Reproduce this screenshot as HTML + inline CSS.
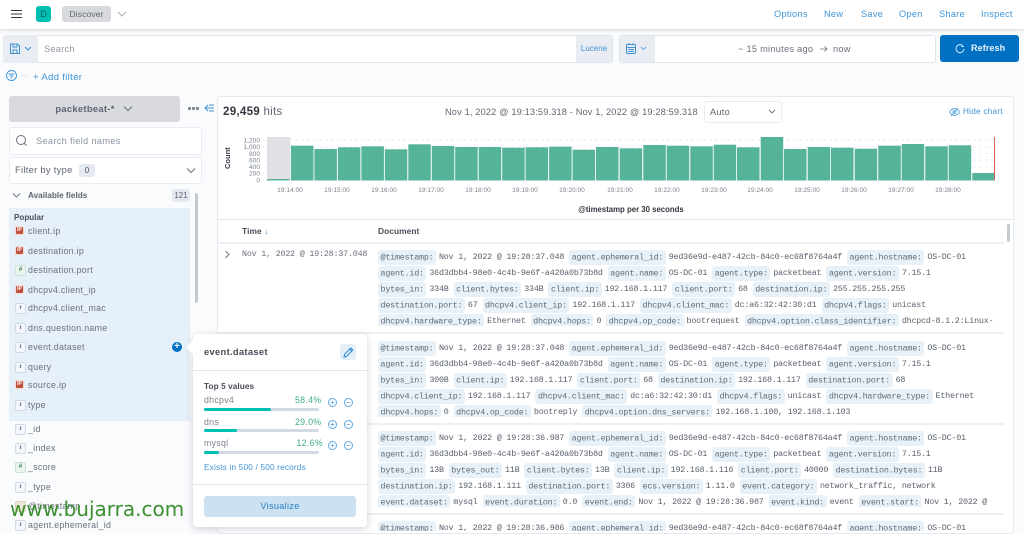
<!DOCTYPE html>
<html><head><meta charset="utf-8"><style>
html,body{margin:0;padding:0;width:1024px;height:531px;overflow:hidden;background:#fafbfd;font-family:"Liberation Sans",sans-serif;}
.a{position:absolute;white-space:nowrap;}
.t{position:absolute;white-space:nowrap;font-size:9.2px;letter-spacing:.28px;color:#5f6673;line-height:12px;transform:translateY(-6px);}
.l{position:absolute;white-space:nowrap;font-size:9.2px;letter-spacing:.3px;color:#3f93d4;line-height:12px;transform:translateY(-6px);}
.f{position:absolute;left:28px;white-space:nowrap;font-size:8.8px;letter-spacing:.3px;color:#69707d;line-height:12px;transform:translateY(-6px);}
.i{position:absolute;left:15px;width:9px;height:9px;border-radius:2px;background:#f3f6fa;border:.5px solid #d3dae6;transform:translateY(-5px);font:italic bold 6px/9px "Liberation Serif",serif;color:#4a5a78;text-align:center;}
.ip{background:#c0523e;border:1.5px solid #f8d7cf;width:7px;height:7px;color:#fff;font:bold 5px/7px "Liberation Sans",sans-serif;}
.nu{background:#eaf5ee;border-color:#cde5d8;color:#3f7d5f;font:bold 6px/9px "Liberation Sans",sans-serif;}
.d{position:absolute;left:378px;width:630px;font:8.4px/16px "Liberation Mono",monospace;letter-spacing:-.21px;color:#5a616d;white-space:nowrap;overflow:hidden;}
.d div{height:16px;}
.d b{font-weight:normal;background:#e8f1f8;color:#626a77;border-radius:3px;padding:2.5px 2.5px;margin-right:3px;}
.d i{font-style:normal;margin-right:5px;}
.sep{position:absolute;left:218px;width:786px;height:2px;background:#eef0f5;}
.c{position:absolute;width:7px;height:7px;border:1px solid #5fa6dc;border-radius:50%;transform:translateY(-4px);color:#3f93d4;font:8px/7px "Liberation Sans",sans-serif;text-align:center;}
svg{position:absolute;overflow:visible;}
</style></head><body>

<div class="a" style="left:0;top:0;width:1024px;height:29px;background:#fff;box-shadow:0 1px 3px rgba(90,100,120,.25);"></div>
<div class="a" style="left:11px;top:10px;width:11px;height:1px;background:#343741;box-shadow:0 3.5px 0 #343741,0 7px 0 #343741;"></div>
<div class="a" style="left:36px;top:6px;width:15px;height:16px;border-radius:3px;background:#00bfb3;color:#0b5f58;font-size:9px;line-height:16px;text-align:center;">D</div>
<div class="a" style="left:62px;top:6px;width:49px;height:16px;border-radius:3px;background:#d8d9dc;color:#5f6673;font-size:8.6px;letter-spacing:.1px;line-height:16px;text-align:center;">Discover</div>
<svg style="left:117px;top:10px" width="12" height="8" fill="none" stroke="#a8adb5" stroke-width="1"><path d="M1 2l4 4 4-4"/></svg>
<div class="l" style="left:774px;top:14px;">Options</div>
<div class="l" style="left:824px;top:14px;">New</div>
<div class="l" style="left:861px;top:14px;">Save</div>
<div class="l" style="left:899px;top:14px;">Open</div>
<div class="l" style="left:939px;top:14px;">Share</div>
<div class="l" style="left:981px;top:14px;">Inspect</div>

<div class="a" style="left:3px;top:35px;width:608px;height:26px;background:#fff;border:1px solid #dfe4ec;border-radius:3px;"></div>
<div class="a" style="left:3px;top:35px;width:35px;height:28px;background:#e9edf3;border-radius:3px 0 0 3px;"></div>
<svg style="left:10px;top:43px" width="26" height="12" fill="none" stroke="#3f93d4" stroke-width="1"><path d="M.5 1h7l2 2v7.5H.5zM3 1v3h4V1M3 10V7h4v3"/><path d="M15 4l3 3 3-3"/></svg>
<div class="t" style="left:44px;top:49px;color:#9098a4;">Search</div>
<div class="a" style="left:576px;top:36px;width:36px;height:26px;background:#e9edf3;color:#3f93d4;font-size:8px;line-height:26px;text-align:center;">Lucene</div>
<div class="a" style="left:619px;top:35px;width:315px;height:26px;background:#fff;border:1px solid #dfe4ec;border-radius:3px;"></div>
<div class="a" style="left:620px;top:36px;width:35px;height:26px;background:#e9edf3;border-radius:3px 0 0 3px;"></div>
<svg style="left:626px;top:43px" width="26" height="12" fill="none" stroke="#3f93d4" stroke-width="1"><rect x=".5" y="1.5" width="9" height="9" rx="1"/><path d="M.5 4.500h9M3 0v2M7 0v2M2 6.500h6M2 8.500h6"/><path d="M15 4l2.500 2.500L20 4" stroke="#6ba9dc"/></svg>
<div class="t" style="left:738px;top:49px;color:#69707d;">~ 15 minutes ago</div>
<svg style="left:819px;top:45px" width="10" height="8" fill="none" stroke="#69707d" stroke-width=".8"><path d="M1 4h7M5.500 1.500L8 4 5.500 6.500"/></svg>
<div class="t" style="left:833px;top:49px;color:#69707d;">now</div>
<div class="a" style="left:940px;top:35px;width:79px;height:27px;background:#0071c2;border-radius:3px;"></div>
<svg style="left:955px;top:44px" width="10" height="10" fill="none" stroke="#cfe6f7" stroke-width="1"><path d="M7.500 1.500A4 4 0 1 0 9 5M7 .5v2h2"/></svg>
<div class="a" style="left:971px;top:42px;color:#eaf4fb;font-size:9px;font-weight:bold;line-height:13px;letter-spacing:.1px;">Refresh</div>

<svg style="left:6px;top:70px" width="12" height="12" fill="none" stroke="#3f93d4" stroke-width=".9"><circle cx="5.500" cy="5.500" r="5"/><path d="M2.500 4h6M3.500 6h4M4.800 8h1.500"/></svg>
<div class="a" style="left:21px;top:75px;width:6px;height:1px;background:#e3e6ec;"></div>
<div class="l" style="left:33px;top:78px;font-size:9.6px;">+ Add filter</div>

<div class="a" style="left:9px;top:96px;width:171px;height:26px;background:#d8dadd;border-radius:3px;color:#5f6673;font-size:9.4px;font-weight:bold;line-height:26px;letter-spacing:.3px;text-align:center;"><span style="margin-right:19px;">packetbeat-*</span></div>
<svg style="left:123px;top:105px" width="12" height="8" fill="none" stroke="#69707d" stroke-width="1"><path d="M1 1.500l4 4 4-4"/></svg>
<div class="a" style="left:188px;top:107px;width:3px;height:3px;background:#7b828e;box-shadow:4px 0 0 #7b828e,8px 0 0 #7b828e;border-radius:1px;"></div>
<svg style="left:204px;top:104px" width="11" height="9" fill="none" stroke="#3f93d4" stroke-width="1"><path d="M4 1L1 4l3 3M1 4h9M5 1h5M5 7h5"/></svg>
<div class="a" style="left:9px;top:127px;width:191px;height:26px;background:#fff;border:1px solid #e9ecf2;border-radius:3px;"></div>
<svg style="left:16px;top:135px" width="12" height="12" fill="none" stroke="#69707d" stroke-width="1"><circle cx="5" cy="5" r="4.500"/><path d="M8.200 8.200l2.500 2.500"/></svg>
<div class="t" style="left:36px;top:141px;color:#8d95a2;font-size:9.3px;">Search field names</div>
<div class="a" style="left:9px;top:157px;width:191px;height:25px;background:#fff;border:1px solid #e9ecf2;border-radius:3px;"></div>
<div class="t" style="left:15px;top:170px;font-size:9.4px;">Filter by type</div>
<div class="a" style="left:79px;top:164px;width:16px;height:13px;background:#e4e8ef;border-radius:3px;color:#4f5662;font-size:8px;line-height:13px;text-align:center;">0</div>
<svg style="left:186px;top:167px" width="12" height="8" fill="none" stroke="#69707d" stroke-width="1"><path d="M1 1.500l4 4 4-4"/></svg>

<svg style="left:12px;top:192px" width="10" height="7" fill="none" stroke="#69707d" stroke-width=".9"><path d="M1 1.500l3.500 3.500L8 1.500"/></svg>
<div class="t" style="left:28px;top:196px;font-weight:bold;font-size:8.2px;letter-spacing:0;">Available fields</div>
<div class="a" style="left:172px;top:189px;width:18px;height:13px;background:#e4e8ef;border-radius:3px;color:#5f6673;font-size:8px;line-height:13px;text-align:center;">121</div>
<div class="a" style="left:195px;top:193px;width:3px;height:110px;background:#c3c8d1;border-radius:2px;"></div>
<div class="a" style="left:9px;top:208px;width:181px;height:213px;background:#e6f0f8;"></div>
<div class="t" style="left:14px;top:218px;font-weight:bold;font-size:8px;letter-spacing:.05px;color:#474d58;">Popular</div>

<div class="i ip" style="top:231px;">IP</div><div class="f" style="top:231px;">client.ip</div>
<div class="i ip" style="top:251px;">IP</div><div class="f" style="top:251px;">destination.ip</div>
<div class="i nu" style="top:270px;">#</div><div class="f" style="top:270px;">destination.port</div>
<div class="i ip" style="top:290px;">IP</div><div class="f" style="top:290px;">dhcpv4.client_ip</div>
<div class="i" style="top:308px;">t</div><div class="f" style="top:308px;">dhcpv4.client_mac</div>
<div class="i" style="top:328px;">t</div><div class="f" style="top:328px;">dns.question.name</div>
<div class="i" style="top:347px;">t</div><div class="f" style="top:347px;">event.dataset</div>
<div class="i" style="top:367px;">t</div><div class="f" style="top:367px;">query</div>
<div class="i ip" style="top:385px;">IP</div><div class="f" style="top:385px;">source.ip</div>
<div class="i" style="top:405px;">t</div><div class="f" style="top:405px;">type</div>
<div class="i" style="top:429px;">t</div><div class="f" style="top:429px;">_id</div>
<div class="i" style="top:448px;">t</div><div class="f" style="top:448px;">_index</div>
<div class="i nu" style="top:467px;">#</div><div class="f" style="top:467px;">_score</div>
<div class="i" style="top:487px;">t</div><div class="f" style="top:487px;">_type</div>
<div class="i" style="top:506px;background:#efe6d8;border-color:#ded2bd;"></div><div class="f" style="top:506px;">@timestamp</div>
<div class="i" style="top:525px;">t</div><div class="f" style="top:525px;">agent.ephemeral_id</div>
<div class="a" style="left:172px;top:342px;width:10px;height:10px;background:#0071c2;border-radius:50%;color:#fff;font:bold 10px/10px 'Liberation Sans',sans-serif;text-align:center;">+</div>

<div class="a" style="left:217px;top:96px;width:795px;height:436px;background:#fff;border:1px solid #e6e9f0;border-radius:3px;"></div>
<div class="a" style="left:223px;top:105px;font-size:11.6px;letter-spacing:.25px;line-height:14px;color:#5f6673;"><b style="color:#343741;">29,459</b> hits</div>
<div class="t" style="left:445px;top:112px;font-size:9.2px;letter-spacing:.17px;">Nov 1, 2022 @ 19:13:59.318 - Nov 1, 2022 @ 19:28:59.318</div>
<div class="a" style="left:704px;top:101px;width:76px;height:20px;background:#fff;border:1px solid #e9ecf2;border-radius:3px;"></div>
<div class="t" style="left:710px;top:112px;font-size:9.2px;">Auto</div>
<svg style="left:768px;top:109px" width="9" height="6" fill="none" stroke="#69707d" stroke-width=".9"><path d="M1 1l3 3 3-3"/></svg>
<svg style="left:949px;top:107px" width="11" height="10" fill="none" stroke="#5fa6dc" stroke-width=".9"><path d="M.5 5C2 2.500 3.500 1.500 5.500 1.500S9 2.500 10.500 5C9 7.500 7.500 8.500 5.500 8.500S2 7.500.5 5z"/><circle cx="5.500" cy="5" r="1.600"/><path d="M2 9l7-8"/></svg>
<div class="l" style="left:963px;top:112px;font-size:8.2px;letter-spacing:.25px;">Hide chart</div>

<svg style="left:0;top:0" width="1024" height="531">
<g stroke="#eceef2" stroke-width="1" stroke-dasharray="3 3"><path d="M265 140H994M265 147H994M265 153.500H994M265 160H994M265 167H994M265 173.500H994"/></g>
<rect x="267" y="137" width="23.500" height="43.500" fill="#dfe1e5"/>
<g fill="#54b399">
<rect x="267" y="179" width="22.500" height="1.500"/><rect x="291" y="145.700" width="22.500" height="34.800"/><rect x="314.400" y="149" width="22.500" height="31.500"/><rect x="337.900" y="147.300" width="22.500" height="33.200"/><rect x="361.400" y="146.300" width="22.500" height="34.200"/><rect x="384.800" y="149.300" width="22.500" height="31.200"/><rect x="408.300" y="144.300" width="22.500" height="36.200"/><rect x="431.800" y="146" width="22.500" height="34.500"/><rect x="455.200" y="147" width="22.500" height="33.500"/><rect x="478.700" y="147" width="22.500" height="33.500"/><rect x="502.200" y="147.700" width="22.500" height="32.800"/><rect x="525.600" y="147.300" width="22.500" height="33.200"/><rect x="549.100" y="146.700" width="22.500" height="33.800"/><rect x="572.600" y="149.700" width="22.500" height="30.800"/><rect x="596" y="147" width="22.500" height="33.500"/><rect x="619.700" y="148.300" width="22.500" height="32.200"/><rect x="643.300" y="145" width="22.500" height="35.500"/><rect x="666.700" y="145.700" width="22.500" height="34.800"/><rect x="690.300" y="146.300" width="22.500" height="34.200"/><rect x="713.700" y="144.700" width="22.500" height="35.800"/><rect x="737" y="147.300" width="22.500" height="33.200"/><rect x="760.700" y="137" width="22.500" height="43.500"/><rect x="784" y="149" width="22.500" height="31.500"/><rect x="807.700" y="147" width="22.500" height="33.500"/><rect x="831" y="147.700" width="22.500" height="32.800"/><rect x="854.700" y="148.700" width="22.500" height="31.800"/><rect x="878.300" y="145.700" width="22.500" height="34.800"/><rect x="901.700" y="144" width="22.500" height="36.500"/><rect x="925.300" y="146.300" width="22.500" height="34.200"/><rect x="948.700" y="145.300" width="22.500" height="35.200"/><rect x="972.300" y="173" width="22" height="7.500"/>
</g>
<rect x="994" y="137" width="1" height="43.500" fill="#d9625a"/>
<g font-family="Liberation Sans,sans-serif" font-size="6.6" fill="#7b828e" text-anchor="end">
<text x="260" y="142.500">1,200</text><text x="260" y="149">1,000</text><text x="260" y="156">800</text><text x="260" y="162.500">600</text><text x="260" y="169">400</text><text x="260" y="175.500">200</text><text x="260" y="182.500">0</text>
</g>
<text transform="translate(230,169) rotate(-90)" font-family="Liberation Sans,sans-serif" font-size="7.5" font-weight="bold" fill="#343741">Count</text>
<g font-family="Liberation Sans,sans-serif" font-size="6.6" fill="#7b828e" text-anchor="middle">
<text x="290" y="192">19:14:00</text><text x="337" y="192">19:15:00</text><text x="384" y="192">19:16:00</text><text x="431" y="192">19:17:00</text><text x="478" y="192">19:18:00</text><text x="525" y="192">19:19:00</text><text x="572" y="192">19:20:00</text><text x="620" y="192">19:21:00</text><text x="667" y="192">19:22:00</text><text x="714" y="192">19:23:00</text><text x="760" y="192">19:24:00</text><text x="807" y="192">19:25:00</text><text x="854" y="192">19:26:00</text><text x="901" y="192">19:27:00</text><text x="948" y="192">19:28:00</text>
</g>
<text x="631" y="212" text-anchor="middle" font-family="Liberation Sans,sans-serif" font-size="7.8" font-weight="bold" fill="#343741">@timestamp per 30 seconds</text>
</svg>

<div class="a" style="left:218px;top:219px;width:794px;height:1px;background:#e3e6ed;"></div>
<div class="t" style="left:242px;top:231px;font-weight:bold;font-size:8.4px;letter-spacing:.1px;color:#474d58;">Time <span style="color:#3f93d4;font-weight:normal;">↓</span></div>
<div class="t" style="left:378px;top:231px;font-weight:bold;font-size:8.4px;letter-spacing:.05px;color:#474d58;">Document</div>
<div class="sep" style="top:242px;"></div>
<div class="a" style="left:1007px;top:224px;width:3px;height:18px;background:#c3c8d1;border-radius:2px;"></div>
<svg style="left:224px;top:250px" width="7" height="9" fill="none" stroke="#69707d" stroke-width=".9"><path d="M1.500 1l3.500 3.500L1.500 8"/></svg>
<div class="a" style="left:242px;top:249px;font:8.4px/10px 'Liberation Mono',monospace;letter-spacing:-.21px;color:#69707d;">Nov 1, 2022 @ 19:28:37.048</div>

<div class="d" style="top:249px;height:77px;">
<div><b>@timestamp:</b><i>Nov 1, 2022 @ 19:28:37.048</i><b>agent.ephemeral_id:</b><i>9ed36e9d-e487-42cb-84c0-ec68f8764a4f</i><b>agent.hostname:</b><i>OS-DC-01</i></div>
<div><b>agent.id:</b><i>36d3dbb4-98e0-4c4b-9e6f-a420a0b73b8d</i><b>agent.name:</b><i>OS-DC-01</i><b>agent.type:</b><i>packetbeat</i><b>agent.version:</b><i>7.15.1</i></div>
<div><b>bytes_in:</b><i>334B</i><b>client.bytes:</b><i>334B</i><b>client.ip:</b><i>192.168.1.117</i><b>client.port:</b><i>68</i><b>destination.ip:</b><i>255.255.255.255</i></div>
<div><b>destination.port:</b><i>67</i><b>dhcpv4.client_ip:</b><i>192.168.1.117</i><b>dhcpv4.client_mac:</b><i>dc:a6:32:42:30:d1</i><b>dhcpv4.flags:</b><i>unicast</i></div>
<div><b>dhcpv4.hardware_type:</b><i>Ethernet</i><b>dhcpv4.hops:</b><i>0</i><b>dhcpv4.op_code:</b><i>bootrequest</i><b>dhcpv4.option.class_identifier:</b><i>dhcpcd-8.1.2:Linux-</i></div>
</div>
<div class="sep" style="top:332px;"></div>
<div class="d" style="top:340px;height:77px;">
<div><b>@timestamp:</b><i>Nov 1, 2022 @ 19:28:37.048</i><b>agent.ephemeral_id:</b><i>9ed36e9d-e487-42cb-84c0-ec68f8764a4f</i><b>agent.hostname:</b><i>OS-DC-01</i></div>
<div><b>agent.id:</b><i>36d3dbb4-98e0-4c4b-9e6f-a420a0b73b8d</i><b>agent.name:</b><i>OS-DC-01</i><b>agent.type:</b><i>packetbeat</i><b>agent.version:</b><i>7.15.1</i></div>
<div><b>bytes_in:</b><i>300B</i><b>client.ip:</b><i>192.168.1.117</i><b>client.port:</b><i>68</i><b>destination.ip:</b><i>192.168.1.117</i><b>destination.port:</b><i>68</i></div>
<div><b>dhcpv4.client_ip:</b><i>192.168.1.117</i><b>dhcpv4.client_mac:</b><i>dc:a6:32:42:30:d1</i><b>dhcpv4.flags:</b><i>unicast</i><b>dhcpv4.hardware_type:</b><i>Ethernet</i></div>
<div><b>dhcpv4.hops:</b><i>0</i><b>dhcpv4.op_code:</b><i>bootreply</i><b>dhcpv4.option.dns_servers:</b><i>192.168.1.100, 192.168.1.103</i></div>
</div>
<div class="sep" style="top:423px;"></div>
<div class="d" style="top:430px;height:77px;">
<div><b>@timestamp:</b><i>Nov 1, 2022 @ 19:28:36.987</i><b>agent.ephemeral_id:</b><i>9ed36e9d-e487-42cb-84c0-ec68f8764a4f</i><b>agent.hostname:</b><i>OS-DC-01</i></div>
<div><b>agent.id:</b><i>36d3dbb4-98e0-4c4b-9e6f-a420a0b73b8d</i><b>agent.name:</b><i>OS-DC-01</i><b>agent.type:</b><i>packetbeat</i><b>agent.version:</b><i>7.15.1</i></div>
<div><b>bytes_in:</b><i>13B</i><b>bytes_out:</b><i>11B</i><b>client.bytes:</b><i>13B</i><b>client.ip:</b><i>192.168.1.116</i><b>client.port:</b><i>40000</i><b>destination.bytes:</b><i>11B</i></div>
<div><b>destination.ip:</b><i>192.168.1.111</i><b>destination.port:</b><i>3306</i><b>ecs.version:</b><i>1.11.0</i><b>event.category:</b><i>network_traffic, network</i></div>
<div><b>event.dataset:</b><i>mysql</i><b>event.duration:</b><i>0.0</i><b>event.end:</b><i>Nov 1, 2022 @ 19:28:36.987</i><b>event.kind:</b><i>event</i><b>event.start:</b><i>Nov 1, 2022 @</i></div>
</div>
<div class="sep" style="top:513px;"></div>
<div class="d" style="top:520px;height:11px;">
<div><b>@timestamp:</b><i>Nov 1, 2022 @ 19:28:36.986</i><b>agent.ephemeral_id:</b><i>9ed36e9d-e487-42cb-84c0-ec68f8764a4f</i><b>agent.hostname:</b><i>OS-DC-01</i></div>
</div>

<div class="a" style="left:193px;top:334px;width:174px;height:193px;background:#fff;border-radius:4px;box-shadow:0 2px 8px rgba(70,80,100,.25);"></div>
<div class="a" style="left:188px;top:343px;width:9px;height:9px;background:#fff;transform:rotate(45deg);"></div>
<div class="a" style="left:204px;top:346px;font-size:9.4px;font-weight:bold;letter-spacing:.3px;line-height:12px;color:#474d58;">event.dataset</div>
<div class="a" style="left:340px;top:344px;width:16px;height:16px;background:#e2eff9;border-radius:3px;"></div>
<svg style="left:343px;top:347px" width="11" height="11" fill="none" stroke="#2a86cc" stroke-width="1"><path d="M1 10l.6-2.800L7.800 1l2 2-6.200 6.300zM6.800 2l2 2"/></svg>
<div class="a" style="left:193px;top:370px;width:174px;height:1px;background:#e3e6ed;"></div>
<div class="t" style="left:204px;top:387px;font-weight:bold;font-size:8.2px;letter-spacing:.1px;color:#474d58;">Top 5 values</div>

<div class="t" style="left:204px;top:400px;font-size:8.8px;color:#7b828e;">dhcpv4</div>
<div class="t" style="left:295px;top:400px;font-size:8.8px;color:#41a98d;">58.4%</div>
<div class="a" style="left:204px;top:408px;width:115px;height:3px;background:#d3dae6;border-radius:2px;"><div style="width:67px;height:3px;background:#00bfb3;border-radius:2px;"></div></div>
<div class="c" style="left:328px;top:402px;">+</div><div class="c" style="left:344px;top:402px;">−</div>
<div class="t" style="left:204px;top:422px;font-size:8.8px;color:#7b828e;">dns</div>
<div class="t" style="left:295px;top:422px;font-size:8.8px;color:#41a98d;">29.0%</div>
<div class="a" style="left:204px;top:429px;width:115px;height:3px;background:#d3dae6;border-radius:2px;"><div style="width:33px;height:3px;background:#00bfb3;border-radius:2px;"></div></div>
<div class="c" style="left:328px;top:424px;">+</div><div class="c" style="left:344px;top:424px;">−</div>
<div class="t" style="left:204px;top:443px;font-size:8.8px;color:#7b828e;">mysql</div>
<div class="t" style="left:296.500px;top:443px;font-size:8.8px;color:#41a98d;">12.6%</div>
<div class="a" style="left:204px;top:451px;width:115px;height:3px;background:#d3dae6;border-radius:2px;"><div style="width:15px;height:3px;background:#00bfb3;border-radius:2px;"></div></div>
<div class="c" style="left:328px;top:445px;">+</div><div class="c" style="left:344px;top:445px;">−</div>
<div class="l" style="left:204px;top:468px;font-size:8.2px;letter-spacing:.2px;">Exists in 500 / 500 records</div>
<div class="a" style="left:193px;top:484px;width:174px;height:1px;background:#e3e6ed;"></div>
<div class="a" style="left:204px;top:496px;width:152px;height:21px;background:#cce2f3;border-radius:3px;color:#2a7fc0;font-size:9.2px;letter-spacing:.3px;line-height:21px;text-align:center;">Visualize</div>

<div class="a" style="left:10px;top:497px;font:20px/24px 'DejaVu Sans',sans-serif;color:#3b8f2e;">www.bujarra.com</div>
</body></html>
